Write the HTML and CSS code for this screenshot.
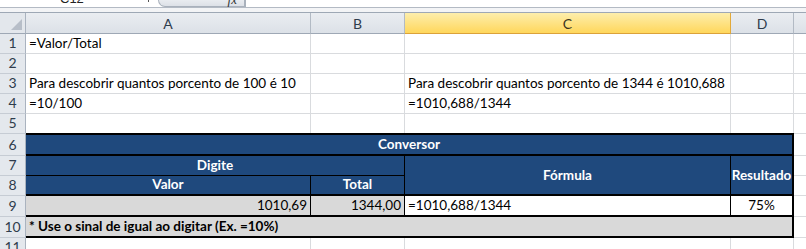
FILE: index.html
```html
<!DOCTYPE html>
<html lang="pt">
<head>
  <meta charset="UTF-8">
  <title>Conversor</title>
  <link rel="stylesheet" href="styles.css">
</head>
<body>
  <div class="formula-bar">
    <div class="name-box"><span class="name-text">C12</span></div>
    <div class="name-drop"></div>
    <div class="fx-box"><span class="fx">fx</span></div>
    <div class="formula-input"></div>
  </div>
  <div class="bar-gap"></div>

  <div class="sheet">
    <!-- column headers -->
    <div class="corner"><span class="corner-tri"></span></div>
    <div class="col-head">A</div>
    <div class="col-head">B</div>
    <div class="col-head selected">C</div>
    <div class="col-head">D</div>
    <div class="col-head last"></div>

    <!-- row 1 -->
    <div class="row-head">1</div>
    <div class="cell">=Valor/Total</div>
    <div class="cell"></div>
    <div class="cell"></div>
    <div class="cell"></div>
    <div class="cell last"></div>

    <!-- row 2 -->
    <div class="row-head">2</div>
    <div class="cell"></div>
    <div class="cell"></div>
    <div class="cell"></div>
    <div class="cell"></div>
    <div class="cell last"></div>

    <!-- row 3 -->
    <div class="row-head">3</div>
    <div class="cell overflow">Para descobrir quantos porcento de 100 é 10</div>
    <div class="cell"></div>
    <div class="cell overflow">Para descobrir quantos porcento de 1344 é 1010,688</div>
    <div class="cell"></div>
    <div class="cell last"></div>

    <!-- row 4 -->
    <div class="row-head">4</div>
    <div class="cell">=10/100</div>
    <div class="cell"></div>
    <div class="cell">=1010,688/1344</div>
    <div class="cell"></div>
    <div class="cell last"></div>

    <!-- row 5 -->
    <div class="row-head">5</div>
    <div class="cell"></div>
    <div class="cell"></div>
    <div class="cell"></div>
    <div class="cell"></div>
    <div class="cell last"></div>

    <!-- rows 6-10: the converter block -->
    <div class="row-head r6">6</div>
    <div class="row-head r7">7</div>
    <div class="row-head r8">8</div>
    <div class="row-head r9">9</div>
    <div class="row-head r10">10</div>

    <div class="converter">
      <div class="cv-title">Conversor</div>
      <div class="cv-head cv-digite">Digite</div>
      <div class="cv-head cv-formula">Fórmula</div>
      <div class="cv-head cv-result">Resultado</div>
      <div class="cv-head cv-valor">Valor</div>
      <div class="cv-head cv-total">Total</div>
      <div class="cv-input num">1010,69</div>
      <div class="cv-input num">1344,00</div>
      <div class="cv-out">=1010,688/1344</div>
      <div class="cv-out center end">75%</div>
      <div class="cv-note">* Use o sinal de igual ao digitar (Ex. =10%)</div>
    </div>

    <div class="cell last r6"></div>
    <div class="cell last r7"></div>
    <div class="cell last r8"></div>
    <div class="cell last r9"></div>
    <div class="cell last r10"></div>

    <!-- row 11 -->
    <div class="row-head r11">11</div>
    <div class="cell r11"></div>
    <div class="cell r11"></div>
    <div class="cell r11"></div>
    <div class="cell r11"></div>
    <div class="cell last r11"></div>
  </div>
</body>
</html>
```

FILE: styles.css
```css
* {
  box-sizing: border-box;
}

html, body {
  margin: 0;
  padding: 0;
  background: #ffffff;
  overflow: hidden;
}

body {
  font-family: 'Lato', 'Liberation Sans', sans-serif;
  font-size: 13.5px;
  color: #000;
  width: 806px;
  height: 249px;
}

/* formula bar, cut at the top of the shot */
.formula-bar {
  display: flex;
  height: 8px;
  border-bottom: 1px solid #b3bac4;
  overflow: hidden;
  background: #fff;
}
.name-box {
  width: 146px;
  position: relative;
}
.name-text {
  position: absolute;
  left: 60px;
  top: -9px;
  font-family: 'Liberation Sans', sans-serif;
  font-size: 13px;
  color: #222;
}
.name-drop {
  width: 12px;
  position: relative;
}
.name-drop::after {
  content: '';
  position: absolute;
  left: 2px;
  top: 0;
  width: 1px;
  height: 2px;
  background: #555;
}
.fx-box {
  width: 87px;
  background: linear-gradient(#e9ecf0, #dde1e7);
  border: 1px solid #a9b1bc;
  border-top: none;
  border-radius: 0 0 0 12px;
  position: relative;
}
.fx {
  position: absolute;
  right: 7px;
  top: -8px;
  font-family: 'Liberation Serif', serif;
  font-style: italic;
  font-size: 13px;
  color: #333;
}
.formula-input {
  flex: 1;
  border-left: 1px solid #a9b1bc;
}
.bar-gap {
  height: 4px;
  background: #f3f4f6;
}

/* worksheet grid */
.sheet {
  display: grid;
  grid-template-columns: 26px 285px 94px 326px 63px 1fr;
  grid-template-rows: 21px 20px 20px 20px 20px 20px 22px 20px 20px 21px 21px 1fr;
  height: 237px;
  border-top: 1px solid #9ea8b5;
}

.corner {
  background: #e3e7ec;
  border-right: 1px solid #aab3bf;
  border-bottom: 1px solid #9ea8b5;
  position: relative;
}
.corner-tri {
  position: absolute;
  right: 3px;
  bottom: 3px;
  width: 0;
  height: 0;
  border-left: 11px solid transparent;
  border-bottom: 11px solid #b7bec8;
}

.col-head {
  background: linear-gradient(#eaedf1, #dce1e7);
  border-right: 1px solid #b2bac4;
  border-bottom: 1px solid #9ea8b5;
  display: flex;
  align-items: center;
  justify-content: center;
  color: #2f3c4c;
  font-size: 14px;
  padding-top: 1px;
}
.col-head.selected {
  background: linear-gradient(#fdeeac, #ffd75c);
  border-right: 1px solid #e2a93a;
  border-bottom: 1px solid #dba23a;
  color: #3a3320;
}
.col-head.last {
  border-right: none;
}

.row-head {
  grid-column: 1;
  background: #e4e8ed;
  border-right: 1px solid #aab3bf;
  border-bottom: 1px solid #c6ccd4;
  display: flex;
  align-items: flex-end;
  justify-content: center;
  color: #2f3c4c;
  font-size: 14px;
  line-height: 18px;
  padding-bottom: 1px;
}
.r6 { grid-row: 7; }
.r7 { grid-row: 8; }
.r8 { grid-row: 9; }
.r9 { grid-row: 10; }
.r10 { grid-row: 11; }
.r11 { grid-row: 12; }

.cell {
  border-right: 1px solid #d9dbde;
  border-bottom: 1px solid #d9dbde;
  padding: 0 3px 1px;
  display: flex;
  align-items: flex-end;
  line-height: 18px;
  white-space: nowrap;
  min-width: 0;
}
.cell.overflow {
  overflow: visible;
  position: relative;
  z-index: 1;
}
.cell.last {
  grid-column: 6;
  border-right: none;
}
.cell.r11 {
  align-items: flex-start;
}

/* converter block A6:D10 */
.converter {
  grid-column: 2 / 6;
  grid-row: 7 / 12;
  margin-top: -1px;
  display: grid;
  grid-template-columns: 285px 94px 326px 63px;
  grid-template-rows: 23px 20px 20px 21px 21px;
  font-weight: bold;
}
.converter > div {
  display: flex;
  align-items: flex-end;
  line-height: 18px;
  white-space: nowrap;
  padding: 0 3px 1px;
}

.cv-title {
  grid-column: 1 / 5;
  background: #1f497d;
  color: #fff;
  justify-content: center;
  border-top: 2px solid #000;
  border-bottom: 2px solid #000;
  border-right: 2px solid #000;
}
.cv-head {
  background: #1f497d;
  color: #fff;
  justify-content: center;
  border-right: 1px solid #000;
}
.cv-digite {
  grid-column: 1 / 3;
  border-bottom: 1px solid #000;
}
.cv-formula {
  grid-column: 3;
  grid-row: 2 / 4;
  border-bottom: 2px solid #000;
  align-items: center !important;
}
.cv-result {
  grid-column: 4;
  grid-row: 2 / 4;
  border-bottom: 2px solid #000;
  border-right: 2px solid #000 !important;
  align-items: center !important;
  padding: 0 !important;
}
.cv-valor,
.cv-total {
  grid-row: 3;
  border-bottom: 2px solid #000;
}
.cv-valor { grid-column: 1; }
.cv-total { grid-column: 2; }

.cv-input {
  background: #d9d9d9;
  font-weight: normal;
  border-right: 1px solid #000;
  border-bottom: 2px solid #000;
}
.cv-out {
  background: #fff;
  font-weight: normal;
  border-right: 1px solid #000;
  border-bottom: 2px solid #000;
}
.num {
  justify-content: flex-end;
}
.center {
  justify-content: center;
}
.end {
  border-right: 2px solid #000 !important;
}
.cv-note {
  grid-column: 1 / 5;
  background: #d9d9d9;
  border-right: 2px solid #000;
  border-bottom: 2px solid #000;
}
```
